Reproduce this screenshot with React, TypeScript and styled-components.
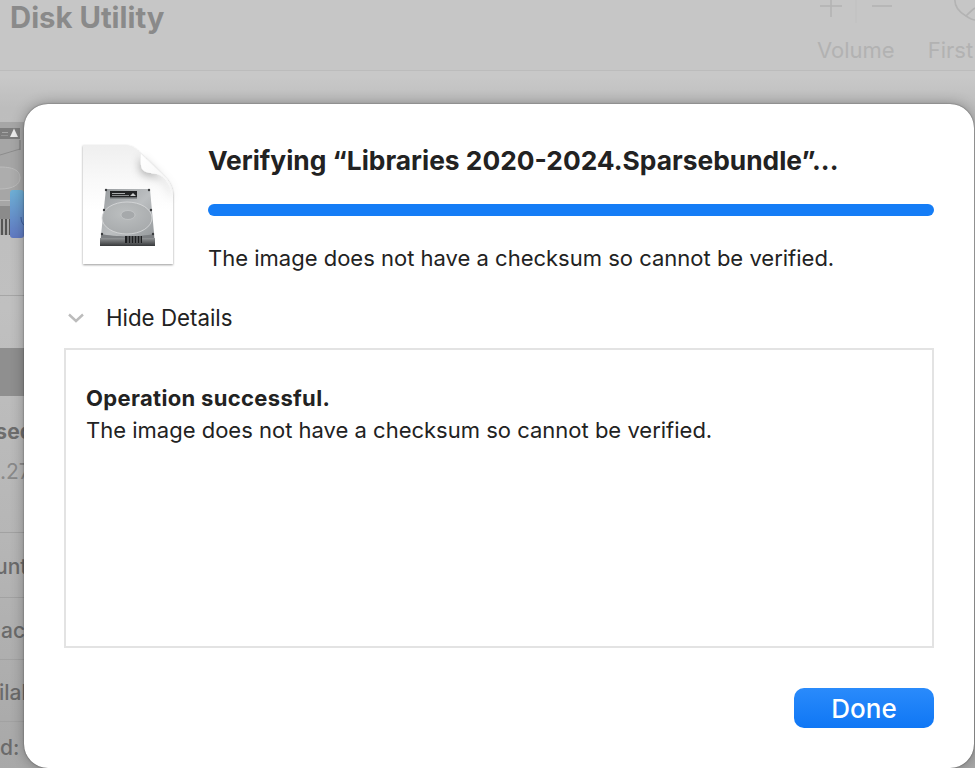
import styled, { createGlobalStyle } from "styled-components";

const GlobalStyle = createGlobalStyle`
  html, body {
    margin: 0;
    padding: 0;
    height: 100%;
    overflow: hidden;
    background: #c6c6c6;
  }
  * {
    box-sizing: border-box;
  }
`;

const DocIcon = () => (
  <svg width="105" height="130" viewBox="0 0 105 130">
    <defs>
      <linearGradient id="page" x1="0" y1="0" x2="0" y2="1">
        <stop offset="0" stopColor="#efefef" />
        <stop offset="0.3" stopColor="#f9f9f9" />
        <stop offset="0.55" stopColor="#ffffff" />
        <stop offset="1" stopColor="#ffffff" />
      </linearGradient>
      <linearGradient id="fold" x1="0" y1="0" x2="1" y2="1">
        <stop offset="0" stopColor="#ffffff" />
        <stop offset="1" stopColor="#f3f3f3" />
      </linearGradient>
      <linearGradient id="plate" x1="0" y1="0" x2="1" y2="1">
        <stop offset="0" stopColor="#979b9e" />
        <stop offset="0.5" stopColor="#bcbfc1" />
        <stop offset="1" stopColor="#8f9396" />
      </linearGradient>
      <linearGradient id="front" x1="0" y1="0" x2="0" y2="1">
        <stop offset="0" stopColor="#929597" />
        <stop offset="1" stopColor="#36383a" />
      </linearGradient>
      <radialGradient id="disc" cx="0.45" cy="0.35" r="0.8">
        <stop offset="0" stopColor="#bcbfc0" />
        <stop offset="1" stopColor="#a3a6a8" />
      </radialGradient>
      <filter id="soft" x="-10%" y="-10%" width="120%" height="120%">
        <feDropShadow dx="0" dy="1" stdDeviation="1" floodColor="#000" floodOpacity="0.4" />
      </filter>
      <filter id="foldShadow" x="-40%" y="-40%" width="180%" height="180%">
        <feDropShadow dx="-1" dy="3" stdDeviation="4" floodColor="#000" floodOpacity="0.3" />
      </filter>
    </defs>
    <path d="M8 5H50C57 5 62 9 66 14L91 38C96 44 98 50 98 56V124H8Z" fill="url(#page)" filter="url(#soft)" />
    <path d="M66 14C66 20 65 27 68 30C71 33 76 33 82 34C90 36 95 44 98 56C98 50 96 44 91 38Z" fill="url(#fold)" filter="url(#foldShadow)" />
    <path d="M31 49H75L80 104H25Z" fill="url(#plate)" />
    <path d="M25 98H80V106H25Z" fill="url(#front)" />
    <ellipse cx="52" cy="78" rx="25" ry="16" fill="url(#disc)" stroke="#d9dbdc" strokeWidth="0.8" />
    <path d="M26 94C40 97 65 97 79 94V98H26Z" fill="#7c7f82" />
    <ellipse cx="53" cy="75" rx="7" ry="4.5" fill="#a6a9ab" stroke="#cdcfd0" strokeWidth="0.6" />
    <rect x="35" y="51" width="27" height="6.5" fill="#232426" />
    <rect x="37" y="53" width="13" height="1" fill="#a9abad" />
    <rect x="37" y="55" width="17" height="1" fill="#8b8d8f" />
    <path d="M55 56L58 53L61 56Z" fill="#c9cbcc" />
    <rect x="35" y="58" width="27" height="1" fill="#8a8d90" />
    <rect x="50" y="96" width="17" height="7" fill="#1d1e20" />
    <path d="M53 96V103M56 96V103M59 96V103M62 96V103M65 96V103" stroke="#8b8d8f" strokeWidth="1" />
    <g fill="#3a3c3e">
      <circle cx="31" cy="50" r="1.2" />
      <circle cx="74" cy="50" r="1.2" />
      <circle cx="29" cy="70" r="1.2" />
      <circle cx="76" cy="70" r="1.2" />
      <circle cx="27" cy="94" r="1.2" />
      <circle cx="78" cy="94" r="1.2" />
    </g>
  </svg>
);

const ToolbarIcons = () => (
  <svg width="158" height="26" viewBox="0 0 158 26" fill="none" stroke="#b3b3b3" strokeWidth="1.6">
    <path d="M14 -2V17M3 6H25" />
    <path d="M39 -2V23" stroke="#c0c0c0" strokeWidth="1" />
    <path d="M55 6H75" />
    <path d="M138 -2C137 6 142 12 149 16C152 18 155 20 158 20" />
    <path d="M158 8C155 10 152 13 149 16" />
  </svg>
);

const PreviewDrawing = () => (
  <svg width="24" height="120" viewBox="0 0 24 120">
    <defs>
      <linearGradient id="tag" x1="0" y1="0" x2="0" y2="1">
        <stop offset="0" stopColor="#6fb0d6" />
        <stop offset="1" stopColor="#6079c2" />
      </linearGradient>
    </defs>
    <rect x="0" y="0" width="24" height="113" fill="#a6a6a6" />
    <rect x="0" y="6" width="20" height="11" fill="#7d7d7d" />
    <rect x="2" y="10" width="6" height="1" fill="#a6a6a6" />
    <rect x="1" y="13" width="7" height="1" fill="#949494" />
    <path d="M14 6.5L18 15H10Z" fill="#ececec" />
    <path d="M0 33L20 27" stroke="#8c8c8c" strokeWidth="1" />
    <path d="M20 18V28" stroke="#777" strokeWidth="1" />
    <path d="M0 45C16 45 20 50 20 56C20 62 14 67 0 67" fill="#adadad" stroke="#bcbcbc" strokeWidth="1" />
    <rect x="0" y="78" width="24" height="1" fill="#bdbdbd" />
    <rect x="0" y="84" width="24" height="13" fill="#8b8b8b" />
    <path d="M2 97V113M6 97V113M10 97V113" stroke="#555" strokeWidth="2" />
    <rect x="10" y="68" width="14" height="48" rx="3" fill="url(#tag)" />
    <path d="M21 95C21 101 24 103 24 103" stroke="#3c5c9c" strokeWidth="1" fill="none" />
  </svg>
);

const App = () => {
  return (
    <>
      <GlobalStyle />
      <Page>
        <WindowHeader>
          <WindowTitle>Disk Utility</WindowTitle>
          <Toolbar>
            <ToolbarIcons />
            <ToolbarLabels>
              <span>Volume</span>
              <span>First</span>
            </ToolbarLabels>
          </Toolbar>
        </WindowHeader>
        <BackColumn>
          <DiskPreview>
            <PreviewDrawing />
          </DiskPreview>
          <Divider />
          <DarkBand />
          <InfoCell>
            <BoldClip>Used</BoldClip>
            <ValueClip>.27</ValueClip>
          </InfoCell>
          <InfoRow $height={65} $shift={-5}>unt</InfoRow>
          <InfoRow $height={62} $shift={1}>ace</InfoRow>
          <InfoRow $height={62} $shift={-1}>ilable</InfoRow>
          <InfoRow $height={47} $last>d:</InfoRow>
        </BackColumn>
      </Page>
      <Sheet>
        <TopSection>
          <IconSlot>
            <DocIcon />
          </IconSlot>
          <TopText>
            <Title>Verifying “Libraries 2020-2024.Sparsebundle”...</Title>
            <ProgressTrack />
            <Message>The image does not have a checksum so cannot be verified.</Message>
          </TopText>
        </TopSection>
        <DetailsToggle>
          <svg width="18" height="10" viewBox="0 0 18 10" fill="none" stroke="#bcbcbc" strokeWidth="2.4">
            <path d="M2 1.5L9 8L16 1.5" />
          </svg>
          <span>Hide Details</span>
        </DetailsToggle>
        <LogBox>
          <LogTitle>Operation successful.</LogTitle>
          <LogLine>The image does not have a checksum so cannot be verified.</LogLine>
        </LogBox>
        <Footer>
          <DoneButton>Done</DoneButton>
        </Footer>
      </Sheet>
    </>
  );
};

const Page = styled.div`
  width: 975px;
  height: 768px;
  overflow: hidden;
  font-family: Inter, "Liberation Sans", sans-serif;
  background: linear-gradient(180deg, #c8c8c8 0%, #c8c8c8 10%, #bdbdbd 14%, #c0c0c0 40%, #b6b6b6 70%, #a8a8a8 100%);
`;

const WindowHeader = styled.div`
  display: flex;
  justify-content: space-between;
  height: 71px;
  padding-left: 10px;
  background: #c6c6c6;
  border-bottom: 1px solid #bcbcbc;
`;

const WindowTitle = styled.div`
  font-size: 29.3px;
  line-height: 36px;
  font-weight: 700;
  color: #8a8a8a;
`;

const Toolbar = styled.div`
  display: flex;
  flex-direction: column;
  width: 158px;
  flex-shrink: 0;
`;

const ToolbarLabels = styled.div`
  display: flex;
  gap: 33px;
  margin-top: 11px;
  font-size: 22px;
  line-height: 26px;
  white-space: nowrap;
  color: #b2b2b2;
`;

const BackColumn = styled.div`
  display: flex;
  flex-direction: column;
  width: 24px;
  height: 697px;
  overflow: hidden;
`;

const DiskPreview = styled.div`
  display: flex;
  height: 173px;
  margin-top: 51px;
  flex-shrink: 0;
`;

const Divider = styled.div`
  height: 1px;
  flex-shrink: 0;
  background: #a6a6a6;
`;

const DarkBand = styled.div`
  height: 48px;
  margin-top: 52px;
  flex-shrink: 0;
  background: #8f8f8f;
`;

const InfoCell = styled.div`
  display: flex;
  flex-direction: column;
  height: 137px;
  flex-shrink: 0;
  padding-top: 23px;
  border-bottom: 1px solid #a2a2a2;
`;

const BoldClip = styled.div`
  margin-left: -20px;
  white-space: nowrap;
  font-size: 21px;
  line-height: 26px;
  font-weight: 700;
  color: #6e6e6e;
`;

const ValueClip = styled.div`
  margin-top: 14px;
  white-space: nowrap;
  font-size: 21px;
  line-height: 26px;
  color: #8a8a8a;
`;

const InfoRow = styled.div<{ $last?: boolean; $height: number; $shift?: number }>`
  display: flex;
  align-items: center;
  height: ${(p) => p.$height}px;
  flex-shrink: 0;
  padding-top: 3px;
  text-indent: ${(p) => p.$shift ?? 0}px;
  white-space: nowrap;
  font-size: 21px;
  font-weight: 500;
  color: #6b6b6b;
  border-bottom: ${(p) => (p.$last ? "none" : "1px solid #a2a2a2")};
`;

const Sheet = styled.div`
  position: absolute;
  top: 104px;
  left: 24px;
  width: 950px;
  height: 664px;
  display: flex;
  flex-direction: column;
  padding: 0 40px;
  border-radius: 24px;
  background: #ffffff;
  box-shadow: 0 0 1.5px rgba(0, 0, 0, 0.6), 0 0 14px rgba(0, 0, 0, 0.3);
  font-family: Inter, "Liberation Sans", sans-serif;
  color: #222222;
`;

const TopSection = styled.div`
  display: flex;
  height: 170px;
  flex-shrink: 0;
`;

const IconSlot = styled.div`
  width: 144px;
  padding: 36px 0 0 11px;
  flex-shrink: 0;
`;

const TopText = styled.div`
  display: flex;
  flex-direction: column;
  flex: 1;
  padding-top: 39px;
`;

const Title = styled.div`
  font-size: 26.35px;
  line-height: 34px;
  font-weight: 700;
  white-space: nowrap;
  color: #222222;
`;

const ProgressTrack = styled.div`
  height: 12px;
  margin-top: 27px;
  border-radius: 6px;
  background: #157df6;
`;

const Message = styled.div`
  margin-top: 27px;
  font-size: 22px;
  line-height: 30px;
  white-space: nowrap;
`;

const DetailsToggle = styled.div`
  display: flex;
  align-items: center;
  gap: 21px;
  height: 30px;
  margin-top: 29px;
  flex-shrink: 0;
  padding-left: 3px;
  font-size: 22.3px;
  line-height: 30px;
`;

const LogBox = styled.div`
  height: 300px;
  margin-top: 15px;
  flex-shrink: 0;
  padding: 32px 20px 0;
  border: 2px solid #e3e3e3;
  font-size: 22px;
  line-height: 32px;
`;

const LogTitle = styled.div`
  font-weight: 700;
  letter-spacing: 0.33px;
`;

const LogLine = styled.div`
  white-space: nowrap;
`;

const Footer = styled.div`
  display: flex;
  justify-content: flex-end;
  margin-top: 40px;
`;

const DoneButton = styled.button`
  width: 140px;
  height: 40px;
  border: none;
  border-radius: 10px;
  background: linear-gradient(180deg, #2a8bfb 0%, #0f77f5 100%);
  font-family: inherit;
  font-size: 26px;
  font-weight: 500;
  color: #ffffff;
`;

export default App;
